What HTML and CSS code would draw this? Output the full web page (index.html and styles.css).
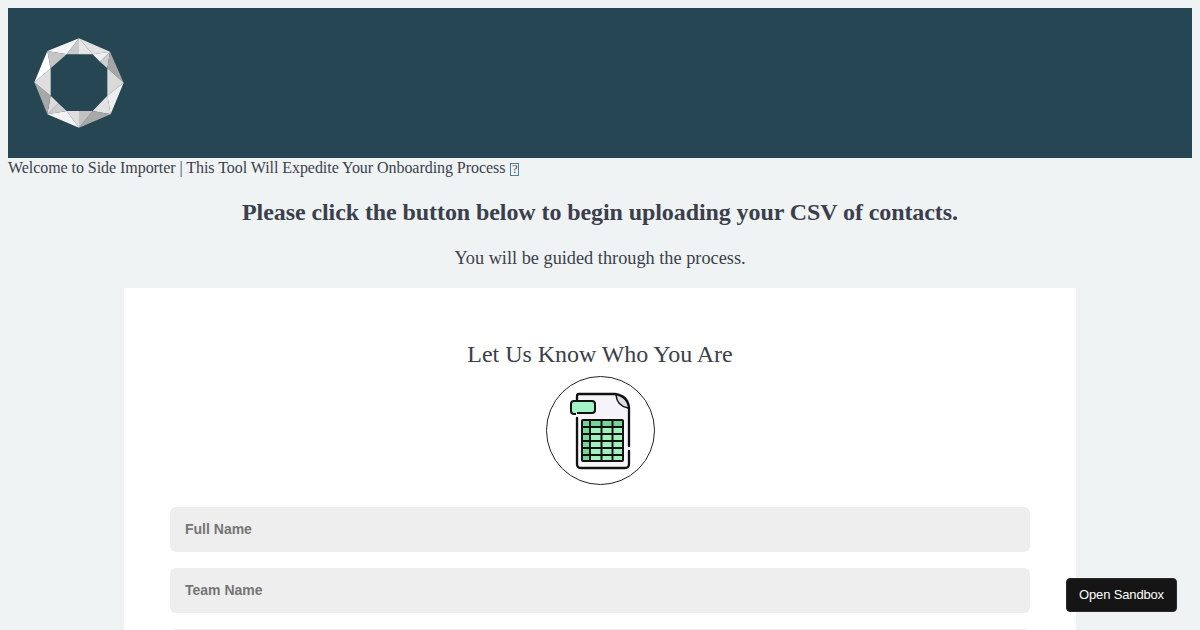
FILE: index.html
```html
<!DOCTYPE html>
<html lang="en">
<head>
<meta charset="utf-8">
<title>Side Importer</title>
<link rel="stylesheet" href="styles.css">
</head>
<body>
<header class="banner">
  <svg class="logo" viewBox="0 0 360 345" aria-label="Logo">
    <polygon fill="#f5f5f5" points="82,78 177,40 140,88"/>
    <polygon fill="#c9c9c9" points="177,40 140,88 177,88"/>
    <polygon fill="#e6e6e6" points="177,40 177,88 218,88"/>
    <polygon fill="#e2e2e2" points="177,40 270,80 218,88"/>
    <polygon fill="#efefef" points="218,88 270,80 240,110"/>
    <polygon fill="#cfcfcf" points="240,110 270,80 262,130"/>
    <polygon fill="#a6a6a6" points="270,80 311,173 262,130"/>
    <polygon fill="#dadada" points="311,173 262,130 262,212"/>
    <polygon fill="#efefef" points="311,173 272,268 262,212"/>
    <polygon fill="#e2e2e2" points="262,212 272,268 218,258"/>
    <polygon fill="#a9a9a9" points="272,268 177,308 218,258"/>
    <polygon fill="#c2c2c2" points="177,308 218,258 177,258"/>
    <polygon fill="#dedede" points="177,308 177,258 140,258"/>
    <polygon fill="#f2f2f2" points="177,308 140,258 82,268"/>
    <polygon fill="#cccccc" points="82,268 140,258 115,235"/>
    <polygon fill="#dcdcdc" points="82,268 115,235 92,212"/>
    <polygon fill="#a8a8a8" points="82,268 92,212 43,172"/>
    <polygon fill="#dfdfdf" points="43,172 92,212 92,130"/>
    <polygon fill="#ffffff" points="43,172 92,130 82,78"/>
    <polygon fill="#c6c6c6" points="82,78 92,130 140,88"/>
  </svg>
</header>
<p class="welcome">Welcome to Side Importer | This Tool Will Expedite Your Onboarding Process <span class="missing-glyph">?</span></p>
<h2 class="headline">Please click the button below to begin uploading your CSV of contacts.</h2>
<p class="guide">You will be guided through the process.</p>
<main class="card">
  <h3 class="card-title">Let Us Know Who You Are</h3>
  <div class="badge">
    <svg class="doc" viewBox="0 0 120 120" aria-label="Spreadsheet file">
      <path fill="#f6f4f8" d="M38 24H75L89 38V95Q89 98 86 98H40Q37 98 37 95V26Z"/>
      <path fill="#dedbe3" d="M76 24Q77 36 89 38Q87 28 76 24Z"/>
      <path fill="none" stroke="#111" stroke-width="1.500" stroke-linecap="round" d="M76 25Q77 36 88 38"/>
      <path fill="none" stroke="#111" stroke-width="2.300" stroke-linecap="round" d="M37 31V26Q37 24 39 24H75Q88 26 89 38V76M89 81V94Q89 98 85 98H41Q37 98 37 94V48"/>
      <rect class="cell-bg" x="42" y="50" width="41" height="41" rx="2"/>
      <rect class="cell-dark" x="42" y="50" width="8" height="41"/>
      <rect class="cell-dark" x="50" y="50" width="33" height="7"/>
      <path fill="none" stroke="#111" stroke-width="2" d="M43 50H82Q83 50 83 51V90Q83 91 82 91H43Q42 91 42 90V51Q42 50 43 50ZM42 57H83M42 64H83M42 71H83M42 78H83M42 85H83M50 50V91M61.500 50V91M72.500 50V91"/>
      <path fill="#a2f4c6" stroke="#111" stroke-width="2" d="M36 44H34Q31 44 31 41V34Q31 31 34 31H52Q55 31 55 34V40Q55 43 52 43H37"/>
    </svg>
  </div>
  <form class="fields">
    <input class="field" type="text" placeholder="Full Name">
    <input class="field" type="text" placeholder="Team Name">
    <input class="field" type="text" placeholder="Email">
  </form>
</main>
<button class="sandbox" type="button">Open Sandbox</button>
</body>
</html>
```

FILE: styles.css
```css
html {
  overflow: hidden;
}
body {
  margin: 8px;
  background: #eff3f4;
  color: #3b3f4c;
  font-family: "Liberation Serif", serif;
  text-rendering: optimizeSpeed;
}
.banner {
  display: flex;
  align-items: center;
  height: 150px;
  padding-left: 12px;
  background: #264653;
}
.logo {
  width: 120px;
  height: 115px;
  margin-top: -1px;
}
.welcome {
  height: 18px;
  margin: 0;
  padding-top: 1px;
  font-size: 16px;
  letter-spacing: -0.055px;
}
.missing-glyph {
  display: inline-block;
  box-sizing: border-box;
  width: 9px;
  height: 13px;
  margin-left: 1px;
  border: 1px solid #4f7f9c;
  font-size: 12px;
  line-height: 11px;
  text-align: center;
  vertical-align: 0;
}
.headline {
  margin: 22px 0 0;
  font-size: 24px;
  letter-spacing: -0.085px;
  text-align: center;
}
.guide {
  margin: 22px 0 0;
  font-size: 18.300px;
  text-align: center;
}
.card {
  box-sizing: border-box;
  width: 952px;
  margin: 19px auto 0;
  padding: 53px 46px 40px;
  background: #fff;
}
.card-title {
  margin: 0;
  font-size: 24px;
  font-weight: 400;
  letter-spacing: -0.04px;
  text-align: center;
}
.badge {
  box-sizing: border-box;
  width: 109px;
  height: 109px;
  margin: 8px auto 22px;
  border: 1px solid #222;
  border-radius: 50%;
}
.doc {
  display: block;
  width: 120px;
  height: 120px;
  margin: -7px;
}
.cell-bg {
  fill: #9ff0bd;
}
.cell-dark {
  fill: #74d598;
}
.fields {
  display: flex;
  flex-direction: column;
  gap: 16px;
}
.field {
  box-sizing: border-box;
  height: 45px;
  padding: 0 15px 2px;
  border: 0;
  border-radius: 6px;
  background: #eeeeee;
  font: 700 14px "Liberation Sans", sans-serif;
}
.field::placeholder {
  color: #757575;
  opacity: 1;
}
.sandbox {
  position: fixed;
  right: 23px;
  bottom: 18px;
  width: 111px;
  height: 34px;
  padding: 0 0 1px;
  border: 1px solid #2a2a2a;
  border-radius: 4px;
  background: #151515;
  color: #fff;
  font: 400 13px "Liberation Sans", sans-serif;
  letter-spacing: -0.15px;
}
```
